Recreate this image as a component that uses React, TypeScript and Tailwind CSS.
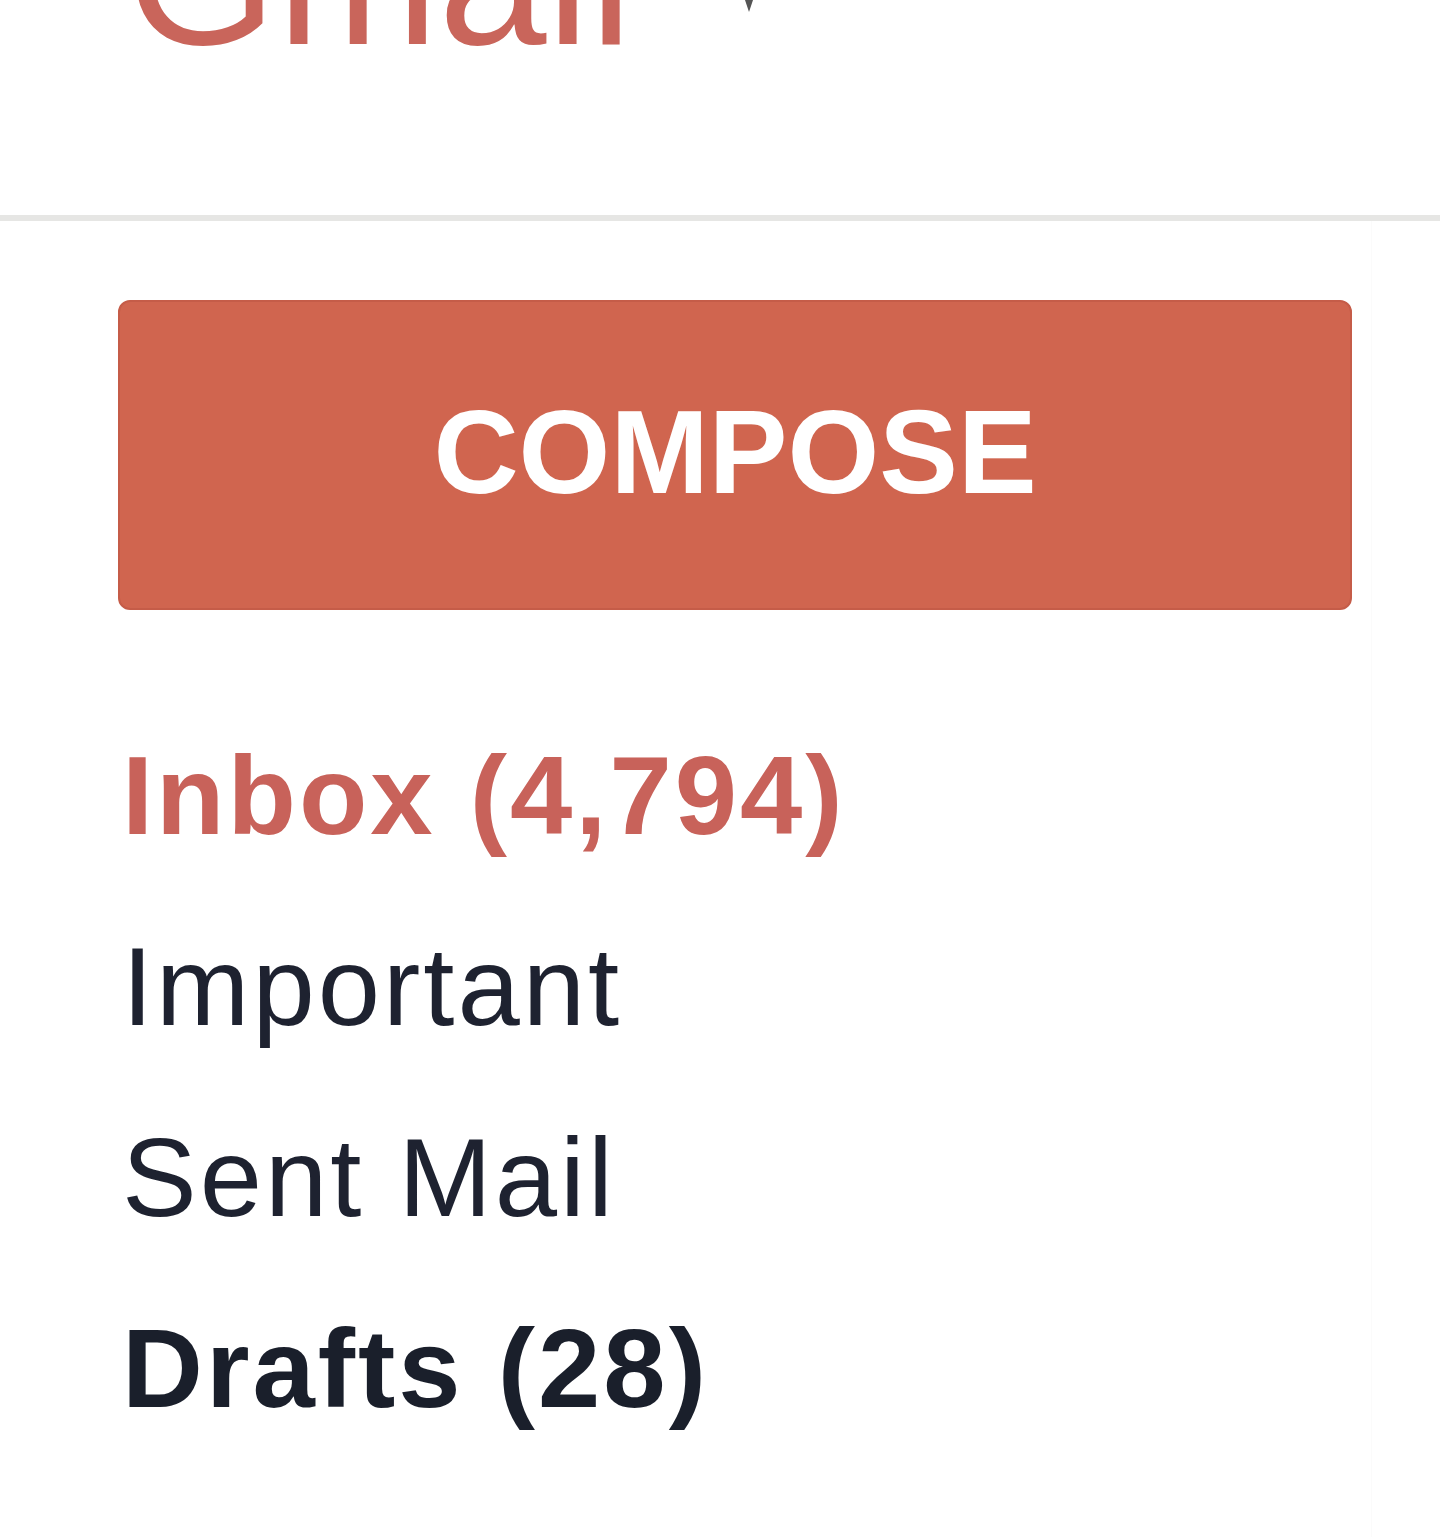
const folders = [
  { label: 'Inbox (4,794)', className: 'font-bold text-[#c8625a]' },
  { label: 'Important', className: 'font-normal text-[#1e2230]' },
  { label: 'Sent Mail', className: 'font-normal text-[#1e2230]' },
  { label: 'Drafts (28)', className: 'font-bold text-[#1a1f2b]' },
];

export default function App() {
  return (
    <div className="w-[1440px] h-[1537px] bg-white overflow-hidden font-['Liberation_Sans',Arial,sans-serif]">
      {/* logo strip, cut off by the crop */}
      <div className="h-[215px] overflow-hidden flex items-start">
        <span className="ml-[126px] -mt-[120px] text-[194px] leading-none text-[#c9655b]">
          Gmail
        </span>
        <span className="ml-[108px] -mt-[12px] w-0 h-0 border-l-[8px] border-r-[8px] border-t-[24px] border-l-transparent border-r-transparent border-t-[#555]"></span>
      </div>
      <div className="h-[6px] bg-[#e6e6e4]"></div>

      <div className="flex">
        <div className="flex flex-col pl-[118px] pt-[79px] w-[1372px] border-r border-[#fbfbfb] h-[1316px]">
          <button className="w-[1234px] h-[310px] rounded-[12px] bg-[#d0654f] border-2 border-[#c55c48] flex items-center justify-center">
            <span className="text-white font-bold text-[118px] leading-none -mt-[6px]">COMPOSE</span>
          </button>

          <ul className="mt-[90px] flex flex-col">
            {folders.map((f) => (
              <li key={f.label} className={`text-[112px] leading-[191px] tracking-[3px] whitespace-nowrap pl-[4px] ${f.className}`}>
                {f.label}
              </li>
            ))}
          </ul>
        </div>
      </div>
    </div>
  );
}
